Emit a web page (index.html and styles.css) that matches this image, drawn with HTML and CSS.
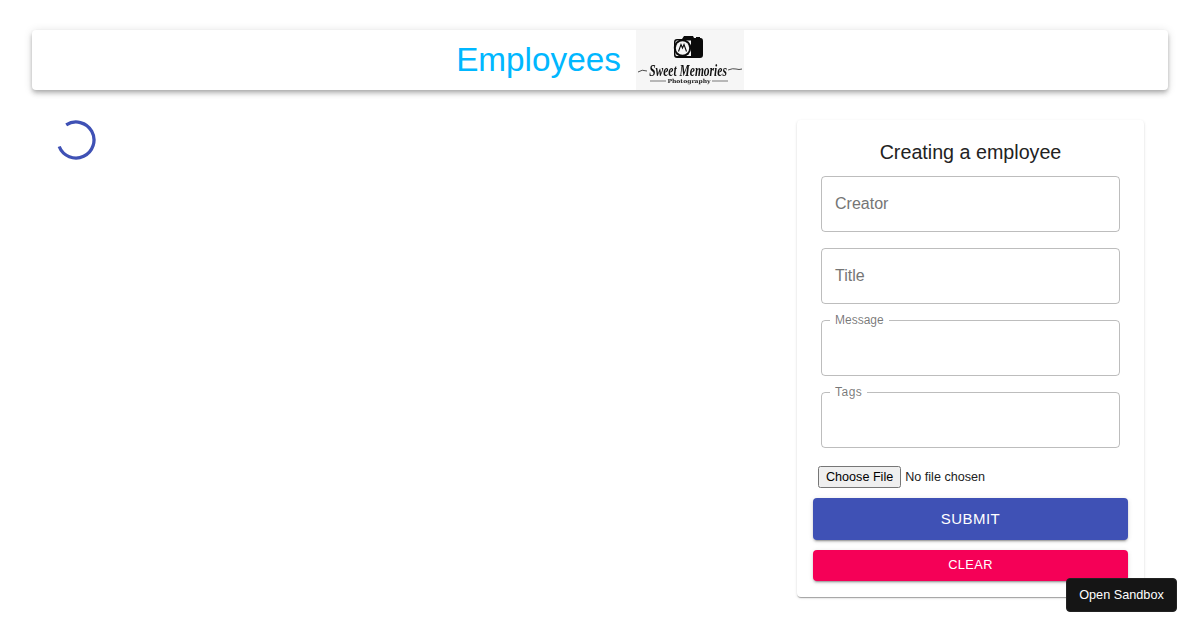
FILE: index.html
```html
<!DOCTYPE html>
<html lang="en">
<head>
<meta charset="UTF-8" />
<meta name="viewport" content="width=device-width, initial-scale=1" />
<title>Employees</title>
<link rel="stylesheet" href="styles.css">
</head>
<body>
  <div class="container">
    <header class="app-bar">
      <h2 class="heading">Employees</h2>
      <svg class="logo" width="108" height="60" viewBox="0 0 108 60">
        <rect width="108" height="60" fill="#f6f6f6" />
        <!-- camera -->
        <path d="M38 12 q0-3 3-3 h5 l2-3 h9 l1 2 h2 v-1 h4 v1 h0.500 q2.500 0 2.500 3 v14 q0 3-3 3 H41 q-3 0-3-3z" fill="#0a0a0a" />
        <path d="M39.500 12 q0-1.500 1.500-1.500 h14 v15.500 H41 q-1.500 0-1.500-1.500z" fill="#f6f6f6" />
        <circle cx="46.500" cy="18" r="8.700" fill="#0a0a0a" />
        <circle cx="46.500" cy="18" r="6.700" fill="#f6f6f6" />
        <path d="M42.500 21.500 l2.500-7 1.500 3.500 1.500-3.500 2.500 7" fill="none" stroke="#0a0a0a" stroke-width="1.100" />
        <!-- name -->
        <path d="M2 42 q4-3 9-1 M92 40 q5-2 8-1 q3 1 6 0" fill="none" stroke="#222" stroke-width="0.800" />
        <text class="logo-name" transform="translate(52 46) scale(.72 1)" text-anchor="middle">Sweet Memories</text>
        <path d="M14 51 h16 M76 51 h16" stroke="#444" stroke-width="0.700" />
        <text class="logo-sub" transform="translate(53 53) scale(1.100 1)" text-anchor="middle">Photography</text>
      </svg>
    </header>

    <main class="content">
      <div class="posts">
        <svg class="spinner" width="40" height="40" viewBox="0 0 40 40">
          <path d="M10.200 4.900 A18 18 0 1 1 3.200 26.500" fill="none" stroke="#3f51b5" stroke-width="3.300" />
        </svg>
      </div>

      <aside class="side">
        <form class="paper">
          <h6 class="form-title">Creating a employee</h6>
          <div class="field">
            <span class="placeholder">Creator</span>
          </div>
          <div class="field">
            <span class="placeholder">Title</span>
          </div>
          <fieldset class="field field-filled">
            <legend>Message</legend>
          </fieldset>
          <fieldset class="field field-filled">
            <legend class="legend-wide">Tags</legend>
          </fieldset>
          <div class="file-row">
            <input type="file" class="file-input" />
          </div>
          <button type="button" class="btn btn-submit">Submit</button>
          <button type="button" class="btn btn-clear">Clear</button>
        </form>
      </aside>
    </main>
  </div>
  <a class="sandbox-link">Open Sandbox</a>
</body>
</html>
```

FILE: styles.css
```css
* { box-sizing: border-box; }
body {
  margin: 8px;
  font-family: "Liberation Sans", Arial, sans-serif;
  color: #222;
  background: #fff;
}

.container { padding: 0 24px; }

.app-bar {
  display: flex;
  justify-content: center;
  align-items: center;
  height: 60px;
  margin: 22px 0 30px;
  background: #fff;
  border-radius: 4px;
  box-shadow: 0 2px 4px -1px rgba(0,0,0,.2), 0 4px 5px 0 rgba(0,0,0,.14), 0 1px 10px 0 rgba(0,0,0,.12);
}
.heading { margin: 0; font-size: 33.300px; font-weight: 400; line-height: 1.200; color: #00b7ff; }
.logo { display: block; margin-left: 15px; filter: blur(.35px); }
.logo-name { font-family: "Liberation Serif", serif; font-style: italic; font-weight: 700; font-size: 16px; fill: #111; }
.logo-sub { font-family: "DejaVu Serif", serif; font-weight: 700; font-size: 5.500px; fill: #222; }

.content { display: flex; justify-content: space-between; padding: 0 24px 12px; }
.spinner { display: block; }

.side { width: 347px; }
.paper {
  display: flex;
  flex-direction: column;
  align-items: center;
  height: 477px;
  padding: 16px;
  background: #fff;
  border-radius: 4px;
  box-shadow: 0 2px 1px -1px rgba(0,0,0,.2), 0 1px 1px 0 rgba(0,0,0,.14), 0 1px 3px 0 rgba(0,0,0,.12);
}
.form-title { margin: 0; font-size: 19.700px; font-weight: 400; line-height: 32px; }

.field {
  display: flex;
  align-items: center;
  flex: none;
  width: 299px;
  height: 56px;
  margin: 8px 0;
  padding: 0 13px;
  border: 1px solid rgba(0,0,0,.26);
  border-radius: 4px;
  min-width: 0;
}
.placeholder { font-size: 16px; color: #757575; }
.field-filled { display: block; height: 61px; margin-top: 3px; padding: 0 8px; }
.field-filled legend { padding: 0 5px; font-size: 12px; line-height: 11px; color: rgba(0,0,0,.54); }
.field-filled .legend-wide { letter-spacing: .5px; }

.file-row { align-self: flex-start; height: 22px; margin: 10px 0 10px 5px; }
.file-input { display: block; height: 22px; font-family: "Liberation Sans", Arial, sans-serif; font-size: 12.600px; color: #222; }
.file-input::file-selector-button { height: 22px; }

.btn {
  display: block;
  flex: none;
  width: 100%;
  border: 0;
  border-radius: 4px;
  color: #fff;
  font-family: inherit;
  text-transform: uppercase;
  box-shadow: 0 3px 1px -2px rgba(0,0,0,.2), 0 2px 2px 0 rgba(0,0,0,.14), 0 1px 5px 0 rgba(0,0,0,.12);
}
.btn-submit { height: 42px; margin-bottom: 10px; padding: 0 0 2px; background: #3f51b5; font-size: 15px; letter-spacing: .46px; }
.btn-clear { height: 31px; padding: 0 0 2px; background: #f50057; font-size: 12.800px; letter-spacing: .4px; }

.sandbox-link {
  position: absolute;
  right: 23px;
  top: 578px;
  width: 111px;
  height: 34px;
  line-height: 33px;
  text-align: center;
  background: #151515;
  border: 1px solid #222;
  border-radius: 4px;
  color: #fff;
  font-size: 12.700px;
}
```
